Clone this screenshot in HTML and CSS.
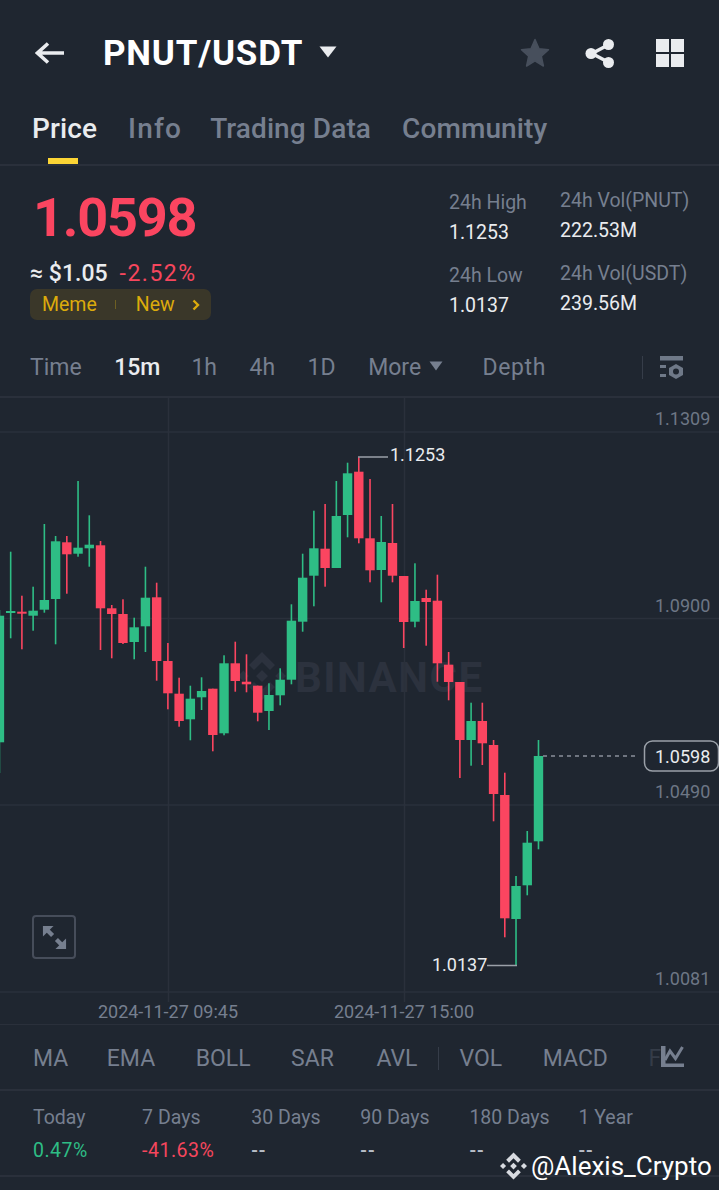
FILE: index.html
```html
<!DOCTYPE html>
<html lang="en">
<head>
    <meta charset="UTF-8">
    <meta name="viewport" content="width=device-width, initial-scale=1.0">
    <title>PNUT/USDT</title>
    <link rel="stylesheet" href="styles.css">
</head>
<body>
<div class="app">

    <header class="topbar">
        <svg class="back-icon" viewBox="0 0 30 22"><path d="M29 11H3M13 1.5L2.5 11L13 20.5"/></svg>
        <h1 class="pair">PNUT/USDT</h1>
        <svg class="pair-caret" viewBox="0 0 18 12"><path d="M0.5 0.5H17.5L9 11.5Z"/></svg>
        <div class="top-actions">
            <svg class="star-icon" viewBox="0 0 30 30"><path d="M15 1.5L19 10.8L28.5 11.7L21.3 18.2L23.4 28L15 22.8L6.6 28L8.7 18.2L1.5 11.7L11 10.8Z"/></svg>
            <svg class="share-icon" viewBox="0 0 30 31"><path class="share-line" d="M23 7L7 15.5L23 24"/><circle cx="23.5" cy="6.5" r="5.5"/><circle cx="6" cy="15.5" r="5.5"/><circle cx="23.5" cy="24.5" r="5.5"/></svg>
            <svg class="grid-icon" viewBox="0 0 28 28"><rect width="13" height="13"/><rect x="15" width="13" height="13"/><rect y="15" width="13" height="13"/><rect x="15" y="15" width="13" height="13"/></svg>
        </div>
    </header>

    <nav class="tabs">
        <a class="tab active">Price</a>
        <a class="tab tab-info">Info</a>
        <a class="tab">Trading Data</a>
        <a class="tab">Community</a>
    </nav>

    <section class="summary">
        <div class="summary-left">
            <div class="last-price">1.0598</div>
            <div class="sub-price">
                <span class="fiat">≈ $1.05</span>
                <span class="change">-2.52%</span>
            </div>
            <div class="tags">
                <span>Meme</span>
                <i class="tag-sep"></i>
                <span>New</span>
                <svg class="tag-arrow" viewBox="0 0 8 12"><path d="M1.5 1.5L6 6L1.5 10.5"/></svg>
            </div>
        </div>
        <div class="stats">
            <div class="stat-col first">
                <div class="stat"><span class="stat-label">24h High</span><span class="stat-value">1.1253</span></div>
                <div class="stat"><span class="stat-label">24h Low</span><span class="stat-value">1.0137</span></div>
            </div>
            <div class="stat-col">
                <div class="stat"><span class="stat-label">24h Vol(PNUT)</span><span class="stat-value">222.53M</span></div>
                <div class="stat"><span class="stat-label">24h Vol(USDT)</span><span class="stat-value">239.56M</span></div>
            </div>
        </div>
    </section>

    <div class="intervals">
        <span>Time</span>
        <span class="selected">15m</span>
        <span>1h</span>
        <span>4h</span>
        <span>1D</span>
        <span class="more">More<svg class="more-caret" viewBox="0 0 14 10"><path d="M0.5 0.5H13.5L7 9.5Z"/></svg></span>
        <span class="depth">Depth</span>
        <i class="interval-sep"></i>
        <svg class="settings-icon" viewBox="0 0 24 23"><rect width="23" height="4.5"/><rect y="9" width="6" height="3"/><rect y="18" width="6" height="3"/><path fill-rule="evenodd" d="M16 8L23 12V19L16 23L9 19V12ZM16 12.5A3 3 0 1 0 16 18.5A3 3 0 1 0 16 12.5Z"/></svg>
    </div>

    <section class="chart">
        <svg class="chart-svg" viewBox="0 398 719 626">
            <g class="watermark">
                <g transform="translate(238 652) scale(2)">
                    <path d="M12 0L18.5 6.5L16 9L12 5L8 9L5.5 6.5ZM12 24L18.5 17.5L16 15L12 19L8 15L5.5 17.5ZM0 12L2.7 9.3L5.4 12L2.7 14.7ZM24 12L21.3 9.3L18.6 12L21.3 14.7ZM12 9L15 12L12 15L9 12Z"/>
                </g>
                <text x="295" y="692">BINANCE</text>
            </g>
            <path class="grid-line" d="M0 432H719M0 618.5H719M0 805H719M0 992H719M168.5 398V1002M404.5 398V1002"/>
            <g id="candles"></g>
            <path class="marker-line" d="M358 457H388M487 965.5H517"/>
            <text class="marker-text" x="390" y="461">1.1253</text>
            <text class="marker-text" x="432" y="971">1.0137</text>
            <path class="last-line" d="M543 756H638"/>
            <rect class="last-box" x="644.5" y="741" width="74" height="30" rx="8"/>
            <text class="marker-text" x="655" y="762.5">1.0598</text>
            <text class="axis-text" x="655" y="425">1.1309</text>
            <text class="axis-text" x="655" y="612">1.0900</text>
            <text class="axis-text" x="655" y="798">1.0490</text>
            <text class="axis-text" x="655" y="985">1.0081</text>
            <text class="date-text" x="168" y="1018">2024-11-27 09:45</text>
            <text class="date-text" x="404" y="1018">2024-11-27 15:00</text>
        </svg>
        <button class="expand-btn">
            <svg viewBox="0 0 26 26"><path d="M1 1H12L1 12Z"/><path d="M25 25H14L25 14Z"/><path class="expand-stem" d="M5 5L11 11M15 15L21 21"/></svg>
        </button>
    </section>

    <div class="indicators">
        <span class="ind-ma">MA</span>
        <span>EMA</span>
        <span>BOLL</span>
        <span class="ind-sar">SAR</span>
        <span>AVL</span>
        <i class="indicator-sep"></i>
        <span>VOL</span>
        <span>MACD</span>
        <span class="faded">F</span>
        <svg class="indicator-icon" viewBox="0 0 23 22"><path d="M0 0H4.5V17.5H23V21H0Z"/><path class="indicator-zig" d="M4 14L9 5L14.5 12.5L21.5 1"/></svg>
    </div>

    <div class="returns">
        <div class="ret"><span class="ret-label">Today</span><span class="ret-value up">0.47%</span></div>
        <div class="ret"><span class="ret-label">7 Days</span><span class="ret-value down">-41.63%</span></div>
        <div class="ret"><span class="ret-label">30 Days</span><span class="ret-value">--</span></div>
        <div class="ret"><span class="ret-label">90 Days</span><span class="ret-value">--</span></div>
        <div class="ret"><span class="ret-label">180 Days</span><span class="ret-value">--</span></div>
        <div class="ret"><span class="ret-label">1 Year</span><span class="ret-value">--</span></div>
    </div>

    <div class="credit">
        <svg class="credit-logo" viewBox="0 0 24 24"><path d="M12 0L18.5 6.5L16 9L12 5L8 9L5.5 6.5ZM12 24L18.5 17.5L16 15L12 19L8 15L5.5 17.5ZM0 12L2.7 9.3L5.4 12L2.7 14.7ZM24 12L21.3 9.3L18.6 12L21.3 14.7ZM12 9L15 12L12 15L9 12Z"/></svg>
        <span>@Alexis_Crypto</span>
    </div>

</div>
<script src="chart.js"></script>
</body>
</html>
```

FILE: styles.css
```css
* {
    box-sizing: border-box;
}

body {
    margin: 0;
    background: #1f2630;
    font-family: Roboto, Arial, sans-serif;
}

.app {
    position: relative;
    width: 719px;
    height: 1190px;
    overflow: hidden;
    background: #1f2630;
    color: #eaecef;
}

/* top bar */
.topbar {
    display: flex;
    align-items: center;
    height: 106px;
    padding: 0 35px;
}

.back-icon {
    width: 30px;
    height: 22px;
    fill: none;
    stroke: #eaecef;
    stroke-width: 3.6;
}

.pair {
    margin: 0 0 0 38px;
    font-size: 35px;
    font-weight: 700;
    letter-spacing: 0.8px;
    color: #fff;
}

.pair-caret {
    width: 18px;
    height: 12px;
    margin: -2px 0 0 16px;
    fill: #eaecef;
}

.top-actions {
    display: flex;
    align-items: center;
    margin-left: auto;
}

.star-icon {
    width: 30px;
    height: 30px;
    margin: 0 35px 0 0;
    fill: #474f5c;
    stroke: #474f5c;
    stroke-width: 1.5;
    stroke-linejoin: round;
}

.share-icon {
    width: 30px;
    height: 31px;
    margin-right: 41px;
    fill: #eaecef;
}

.share-line {
    fill: none;
    stroke: #eaecef;
    stroke-width: 3.5;
}

.grid-icon {
    width: 28px;
    height: 28px;
    fill: #eaecef;
}

/* tabs */
.tabs {
    display: flex;
    gap: 31px;
    height: 60px;
    padding-left: 32px;
    border-bottom: 2px solid #2a303b;
}

.tab {
    position: relative;
    font-size: 28px;
    font-weight: 500;
    line-height: 46px;
    letter-spacing: 0.1px;
    color: #767f8f;
}

.tab-info {
    margin-right: -3px;
    letter-spacing: 1.2px;
}

.tab.active {
    color: #eaecef;
}

.tab.active::after {
    content: "";
    position: absolute;
    left: 16px;
    bottom: 0;
    width: 30px;
    height: 6px;
    background: #fcd535;
}

/* price summary */
.summary {
    display: flex;
    justify-content: space-between;
    height: 179px;
    padding: 0 0 0 30px;
}

.last-price {
    margin: 22px 0 13px 3px;
    font-size: 54px;
    font-weight: 700;
    line-height: 60px;
    letter-spacing: -1.2px;
    color: #fb4560;
}

.sub-price {
    display: flex;
    gap: 12px;
    font-size: 23px;
    line-height: 26px;
}

.fiat {
    font-weight: 500;
    color: #eaecef;
}

.change {
    letter-spacing: 1.5px;
    color: #f6465d;
}

.tags {
    display: flex;
    align-items: center;
    width: 181px;
    height: 31px;
    margin-top: 2px;
    padding-left: 12px;
    border-radius: 7px;
    background: #3a3729;
    font-size: 19.5px;
    color: #dcab0c;
}

.tag-sep {
    width: 1px;
    height: 9px;
    margin: 0 20px 0 18px;
    background: #6e5f22;
}

.tag-arrow {
    width: 8px;
    height: 12px;
    margin-left: 17px;
    fill: none;
    stroke: #dcab0c;
    stroke-width: 2.4;
}

.stats {
    display: flex;
    width: 270px;
}

.stat-col {
    display: flex;
    flex-direction: column;
    gap: 19px;
    padding-top: 23px;
}

.stat-col.first {
    width: 111px;
    padding-top: 25px;
}

.stat {
    display: flex;
    flex-direction: column;
    gap: 6px;
}

.stat-label {
    font-size: 19.5px;
    line-height: 24px;
    color: #767f8f;
}

.stat-value {
    font-size: 19.5px;
    line-height: 24px;
    color: #eaecef;
}

/* interval row */
.intervals {
    display: flex;
    align-items: center;
    gap: 32.5px;
    height: 53px;
    padding: 0 35px 6px 30px;
    border-bottom: 2px solid #2a303b;
    font-size: 23px;
    color: #767f8f;
}

.intervals .selected {
    margin-right: -1.5px;
    font-weight: 500;
    color: #eaecef;
}

.more-caret {
    width: 14px;
    height: 10px;
    margin: 0 0 4px 8px;
    fill: #767f8f;
}

.depth {
    margin-left: 7px;
    letter-spacing: 0.6px;
}

.interval-sep {
    width: 1px;
    height: 23px;
    margin-left: auto;
    background: #363d49;
}

.settings-icon {
    width: 24px;
    height: 23px;
    margin-left: -15.5px;
    fill: #6f7988;
}

/* chart */
.chart {
    position: relative;
    height: 627px;
    border-bottom: 1px solid #2a303b;
}

.chart-svg {
    display: block;
    width: 719px;
    height: 626px;
}

.watermark {
    fill: #2c323e;
}

.watermark text {
    font-size: 42px;
    font-weight: 700;
    letter-spacing: 1.5px;
}

.grid-line {
    fill: none;
    stroke: #2a303b;
    stroke-width: 1.5;
}

.candle-up {
    fill: #2ebd85;
}

.candle-down {
    fill: #fb4560;
}

.marker-line {
    fill: none;
    stroke: #9aa0a8;
    stroke-width: 1.5;
}

.marker-text {
    font-size: 18px;
    fill: #eaecef;
}

.last-line {
    fill: none;
    stroke: #8a909a;
    stroke-width: 1.5;
    stroke-dasharray: 4 4;
}

.last-box {
    fill: #1f2630;
    stroke: #9aa0a8;
    stroke-width: 1.5;
}

.axis-text {
    font-size: 18px;
    fill: #6d7685;
}

.date-text {
    font-size: 18px;
    text-anchor: middle;
    fill: #767f8f;
}

.expand-btn {
    position: absolute;
    left: 32px;
    top: 517px;
    display: flex;
    align-items: center;
    justify-content: center;
    width: 44px;
    height: 44px;
    padding: 0;
    background: none;
    border: 2px solid #464d5a;
    border-radius: 4px;
}

.expand-btn svg {
    width: 25px;
    height: 25px;
    fill: #767f8f;
}

.expand-stem {
    stroke: #767f8f;
    stroke-width: 4.5;
}

/* indicators */
.indicators {
    display: flex;
    align-items: center;
    gap: 40.5px;
    height: 66px;
    padding: 3px 0 0 33px;
    border-bottom: 2px solid #2a303b;
    font-size: 23px;
    color: #767f8f;
}

.ind-ma {
    margin-right: -2px;
}

.ind-sar {
    margin-right: 2px;
}

.indicator-sep {
    width: 1px;
    height: 23px;
    margin: 0 -20px;
    background: #363d49;
}

.faded {
    opacity: 0.25;
}

.indicator-icon {
    width: 23px;
    height: 22px;
    margin: -4px 0 0 -40.5px;
    fill: #767f8f;
}

.indicator-zig {
    fill: none;
    stroke: #767f8f;
    stroke-width: 3;
}

/* period returns */
.returns {
    display: grid;
    grid-template-columns: repeat(6, 109.1px);
    height: 86px;
    padding: 14px 0 0 33px;
    border-bottom: 2px solid #2a303b;
}

.ret {
    display: flex;
    flex-direction: column;
    gap: 8px;
}

.ret-label {
    font-size: 19.5px;
    line-height: 26px;
    color: #767f8f;
}

.ret-value {
    font-size: 19.5px;
    font-weight: 500;
    line-height: 24px;
    letter-spacing: 1px;
    color: #b7bdc6;
}

.ret-value.up,
.ret-value.down {
    font-weight: 400;
    letter-spacing: 0.5px;
}

.ret-value.up {
    color: #2ebd85;
}

.ret-value.down {
    color: #f6465d;
}

/* watermark over the bottom row */
.credit {
    position: absolute;
    left: 500px;
    top: 1151px;
    display: flex;
    align-items: center;
    gap: 4px;
    font-size: 26px;
    color: #fff;
}

.credit-logo {
    width: 27px;
    height: 28px;
    fill: #d8dbe0;
}
```

FILE: chart.js
```js
// color, wick top, wick bottom, body top, body bottom (page y)
const candles = [
    ["up", 610, 773, 615.7, 742.3], ["up", 551.7, 638.3, 611, 613], ["down", 595.7, 649.3, 611.7, 613.7],
    ["up", 586.7, 630.7, 610.7, 615.7], ["up", 524, 612.7, 600, 609.7], ["up", 536, 644.3, 541.3, 599],
    ["down", 536, 593.7, 542.3, 554.3], ["up", 481, 556.7, 547.7, 553.7], ["up", 515.3, 566.7, 544.7, 548.3],
    ["down", 541, 650, 545.3, 608.3], ["down", 605, 658.3, 608.3, 614], ["down", 599.3, 644, 614, 643],
    ["up", 617.7, 659.3, 627.3, 642], ["up", 566.7, 652, 597.7, 626.3], ["down", 582.7, 680.7, 597.3, 661],
    ["down", 643, 709.3, 661, 693.3], ["down", 677.7, 726.7, 693.7, 721], ["up", 685.7, 740.3, 698.7, 719.3],
    ["up", 677.3, 710, 691, 697.3], ["down", 688.7, 751.3, 688.7, 735], ["up", 655.3, 735.3, 663.3, 733.3],
    ["down", 641.7, 691.7, 663.3, 681], ["down", 654.3, 692.3, 681.7, 684.3], ["down", 685.7, 721.3, 685.7, 712.7],
    ["up", 683.3, 730, 695, 711], ["up", 668.3, 705.3, 679.7, 695.3], ["up", 604.3, 684.3, 620.7, 679.7],
    ["up", 553.7, 631.7, 577.7, 621.7], ["up", 510.7, 606.3, 548.3, 575.7], ["down", 504, 586.7, 548.7, 568],
    ["up", 481, 568, 516, 568], ["up", 462.7, 537.3, 473.3, 515], ["down", 457.3, 543.3, 471.7, 538.3],
    ["down", 479, 582.3, 538.3, 570.3], ["up", 516, 602.3, 542, 570], ["down", 504, 582.3, 543, 575.7],
    ["down", 576, 648, 576, 622], ["up", 563.3, 627.3, 601, 621.7], ["down", 589.7, 645.7, 598, 602],
    ["down", 574.7, 681.7, 600.7, 663.3], ["down", 652, 700.3, 664.7, 682], ["down", 682, 778, 682, 740],
    ["up", 702.7, 765.7, 721, 740], ["down", 702.7, 765, 721, 743.3], ["down", 740, 821.3, 745, 794],
    ["down", 772.7, 937.3, 795, 918.3], ["up", 876, 965.7, 886, 919], ["up", 831, 895.3, 842.7, 885.3],
    ["up", 740, 849.3, 756, 841.3]
];

const svgNs = "http://www.w3.org/2000/svg";
const group = document.getElementById("candles");
const step = 11.23;
const bodyWidth = 9.4;
const wickWidth = 1.6;

function addRect(x, y, w, h, color) {
    let rect = document.createElementNS(svgNs, "rect");
    rect.setAttribute("x", x);
    rect.setAttribute("y", y);
    rect.setAttribute("width", w);
    rect.setAttribute("height", h);
    rect.setAttribute("class", "candle-" + color);
    group.appendChild(rect);
}

candles.forEach((c, i) => {
    let x = -0.56 + step * i;
    addRect(x - wickWidth / 2, c[1], wickWidth, c[2] - c[1], c[0]);
    addRect(x - bodyWidth / 2, c[3], bodyWidth, c[4] - c[3], c[0]);
});
```
